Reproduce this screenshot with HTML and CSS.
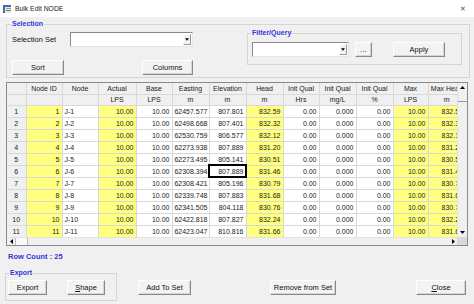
FILE: index.html
```html
<!DOCTYPE html>
<html lang="en">
<head>
  <meta charset="UTF-8">
  <title>Bulk Edit NODE</title>
  <link rel="stylesheet" href="styles.css">
</head>
<body>
  <div class="titlebar">
    <svg class="appicon" viewBox="0 0 8 8">
      <rect x="0" y="0" width="8" height="8" fill="#dfe6f2"/>
      <rect x="0" y="0" width="8" height="2" fill="#3b6cc4"/>
      <rect x="0" y="0" width="2" height="8" fill="#3b6cc4"/>
      <rect x="3" y="3" width="5" height="1" fill="#e08a2c"/>
      <rect x="3" y="5" width="5" height="1" fill="#4a9a4a"/>
    </svg>
    <span class="title">Bulk Edit NODE</span>
    <span class="close">&#x2715;</span>
  </div>

  <fieldset class="group selection">
    <legend>Selection</legend>
    <div class="sel-left">
      <div class="sel-row">
        <label>Selection Set</label>
        <div class="combo set-combo">
          <span class="drop"><svg viewBox="0 0 5 3"><path d="M0 0h5L2.5 3z"/></svg></span>
        </div>
      </div>
      <div class="sel-buttons">
        <button class="btn sort">Sort</button>
        <button class="btn columns">Columns</button>
      </div>
    </div>
    <fieldset class="group filter">
      <legend>Filter/Query</legend>
      <div class="combo filter-combo">
        <span class="drop"><svg viewBox="0 0 5 3"><path d="M0 0h5L2.5 3z"/></svg></span>
      </div>
      <button class="btn dots">...</button>
      <button class="btn apply">Apply</button>
    </fieldset>
  </fieldset>

  <div class="grid">
    <div class="sheet">
      <table>
        <colgroup>
          <col class="c-row"><col class="c36"><col class="c36"><col class="c38"><col class="c36">
          <col class="c37"><col class="c37"><col class="c37"><col class="c36"><col class="c37">
          <col class="c37"><col class="c35"><col class="c37">
        </colgroup>
        <thead>
          <tr>
            <th></th><th>Node ID</th><th>Node</th><th>Actual</th><th>Base</th><th>Easting</th>
            <th>Elevation</th><th>Head</th><th>Init Qual</th><th>Init Qual</th><th>Init Qual</th>
            <th>Max</th><th>Max Head</th>
          </tr>
          <tr>
            <th></th><th></th><th></th><th>LPS</th><th>LPS</th><th>m</th>
            <th>m</th><th>m</th><th>Hrs</th><th>mg/L</th><th>%</th>
            <th>LPS</th><th>m</th>
          </tr>
        </thead>
        <tbody id="rows"></tbody>
      </table>
    </div>
    <div class="vscroll">
      <span class="arrow"><svg viewBox="0 0 5 3"><path d="M0 3h5L2.5 0z"/></svg></span>
      <span class="vthumb"></span>
      <span class="track"></span>
      <span class="arrow"><svg viewBox="0 0 5 3"><path d="M0 0h5L2.5 3z"/></svg></span>
    </div>
    <div class="hscroll">
      <span class="arrow"><svg viewBox="0 0 3 5"><path d="M3 0v5L0 2.5z"/></svg></span>
      <span class="hthumb"></span>
      <span class="track"></span>
      <span class="arrow"><svg viewBox="0 0 3 5"><path d="M0 0v5L3 2.5z"/></svg></span>
    </div>
    <div class="corner"></div>
  </div>

  <div class="rowcount">Row Count : 25</div>

  <div class="bottom">
    <fieldset class="group export">
      <legend>Export</legend>
      <button class="btn b-export">Export</button>
      <button class="btn b-shape"><u>S</u>hape</button>
    </fieldset>
    <button class="btn addset">Add To Set</button>
    <button class="btn removeset">Remove from Set</button>
    <button class="btn closebtn"><u>C</u>lose</button>
  </div>

  <script>
    const nodes = [
      ['62457.577', '807.801', '832.59'],
      ['62498.668', '807.401', '832.32'],
      ['62530.759', '806.577', '832.12'],
      ['62273.938', '807.889', '831.20'],
      ['62273.495', '805.141', '830.51'],
      ['62308.394', '807.889', '831.46'],
      ['62308.421', '805.196', '830.79'],
      ['62339.748', '807.883', '831.68'],
      ['62341.505', '804.118', '830.76'],
      ['62422.818', '807.827', '832.24'],
      ['62423.047', '810.816', '831.66']
    ];

    const body = document.getElementById('rows');

    nodes.forEach(([easting, elevation, head], i) => {
      const id = i + 1;
      const current = id === 6 ? ' current' : '';
      const tr = document.createElement('tr');
      tr.innerHTML =
        `<td class="rowhead">${id}</td>` +
        `<td class="calc num">${id}</td>` +
        `<td>J-${id}</td>` +
        `<td class="calc num">10.00</td>` +
        `<td class="num">10.00</td>` +
        `<td class="num tight">${easting}</td>` +
        `<td class="num${current}">${elevation}</td>` +
        `<td class="calc num">${head}</td>` +
        `<td class="num">0.00</td>` +
        `<td class="num">0.000</td>` +
        `<td class="num">0.00</td>` +
        `<td class="calc num">10.00</td>` +
        `<td class="calc num">${head}</td>`;
      body.appendChild(tr);
    });
  </script>
</body>
</html>
```

FILE: styles.css
```css
body {
  margin: 0;
  width: 474px;
  height: 304px;
  overflow: hidden;
  background: #f0f0f0;
  font-family: "Liberation Sans", Arial, sans-serif;
  font-size: 7.5px;
  color: #111;
}

.titlebar {
  height: 17px;
  background: #fff;
  display: flex;
  align-items: center;
  padding: 0 8px 0 3px;
}

.appicon {
  width: 8px;
  height: 8px;
  margin-right: 4px;
}

.title {
  flex: 1;
  font-size: 6.8px;
  color: #222;
}

.close {
  font-size: 7px;
  color: #555;
}

/* group boxes */
.group {
  margin: 0;
  padding: 0;
  min-width: 0;
  border: 1px solid #d5d5d5;
}

.group legend {
  padding: 0 1px;
  margin-left: -1px;
  font-size: 7px;
  line-height: 8px;
  font-weight: bold;
  color: #3434d8;
}

.selection {
  margin: 3px 4px 0 6px;
  padding: 0 7px 2px 5px;
  display: flex;
  align-items: flex-start;
}

.sel-left {
  width: 181px;
}

.sel-row {
  display: flex;
  align-items: center;
  margin-top: 4px;
}

.sel-row label {
  width: 58px;
}

.set-combo {
  width: 123px;
}

.sel-buttons {
  display: flex;
  justify-content: space-between;
  margin-top: 13px;
}

.sort { width: 52px; }
.columns { width: 51px; }

.filter {
  margin: 1px 0 0 auto;
  width: 204px;
  padding: 5px 5px 7px 4px;
  display: flex;
  align-items: center;
}

.filter-combo { width: 97px; }
.dots { width: 17px; margin-left: 6px; }
.apply { width: 52px; margin-left: 21px; }

/* controls */
.btn {
  height: 15px;
  padding: 0;
  font-family: inherit;
  font-size: 7.5px;
  color: #111;
  background: #f3f3f3;
  border: 1px solid;
  border-color: #fff #888 #888 #fff;
  box-shadow: inset -1px -1px #d6d6d6;
}

.btn u {
  text-decoration-thickness: 1px;
}

.combo {
  height: 15px;
  box-sizing: border-box;
  background: #fff;
  border: 1px solid;
  border-color: #8a8a8a #e6e6e6 #e6e6e6 #8a8a8a;
  display: flex;
  justify-content: flex-end;
  align-items: center;
  padding-right: 1px;
}

.drop {
  width: 8px;
  height: 11px;
  box-sizing: border-box;
  display: flex;
  align-items: center;
  justify-content: center;
  background: #f3f3f3;
  border: 1px solid;
  border-color: #fff #999 #999 #fff;
}

.drop svg {
  width: 4px;
  height: 3px;
}

/* data grid */
.grid {
  margin: 4px 0 0 6px;
  width: 462px;
  height: 164px;
  box-sizing: border-box;
  border: 1px solid #8a8a8a;
  background: #fff;
  display: grid;
  grid-template-columns: 1fr 10px;
  grid-template-rows: 1fr 8px;
}

.sheet {
  overflow: hidden;
}

.sheet table {
  width: 458px;
  table-layout: fixed;
  border-collapse: collapse;
  border-style: hidden;
  font-size: 7px;
  color: #222;
}

.c-row { width: 19px; }
.c35 { width: 35px; }
.c36 { width: 36px; }
.c37 { width: 37px; }
.c38 { width: 38px; }

.sheet th,
.sheet td {
  padding: 0 2px;
  border: 1px solid #d8d8d8;
  line-height: 9px;
  white-space: nowrap;
}

.sheet thead tr {
  height: 11px;
}

.sheet tbody tr {
  height: 12px;
}

.sheet th {
  font-weight: normal;
  background: #f0f0f0;
  text-align: center;
}

.sheet .rowhead {
  background: #f0f0f0;
  text-align: center;
}

.sheet .num {
  text-align: right;
}

.sheet .tight {
  padding: 0 1px 0 0;
}

.sheet .calc {
  background: #ffff80;
}

.sheet .current {
  outline: 2px solid #000;
  outline-offset: -1px;
}

/* scrollbars */
.vscroll,
.hscroll {
  display: flex;
  background: #f0f0f0;
}

.vscroll {
  flex-direction: column;
  border-left: 1px solid #e2e2e2;
}

.hscroll {
  border-top: 1px solid #e2e2e2;
}

.arrow {
  display: flex;
  align-items: center;
  justify-content: center;
}

.vscroll .arrow {
  height: 9px;
}

.vscroll .arrow svg {
  width: 5px;
  height: 3px;
}

.hscroll .arrow {
  width: 8px;
}

.hscroll .arrow svg {
  width: 3px;
  height: 5px;
}

.vthumb {
  height: 9px;
  border-bottom: 1px solid #9a9a9a;
}

.hthumb {
  width: 11px;
  border-right: 1px solid #bdbdbd;
  border-left: 1px solid #bdbdbd;
  background: #fafafa;
}

.track {
  flex: 1;
}

.corner {
  background: #d9d9d9;
}

/* bottom */
.rowcount {
  margin: 6px 0 0 8px;
  line-height: 10px;
  font-weight: bold;
  color: #3434d8;
}

.bottom {
  display: flex;
  align-items: flex-start;
  margin: 7px 0 0 5px;
}

.export {
  padding: 3px 11px 5px 2px;
  display: flex;
  gap: 20px;
}

.export legend {
  margin-left: 1px;
}

.b-export { width: 39px; }
.b-shape { width: 38px; }

.addset { width: 53px; margin: 11px 0 0 21px; }
.removeset { width: 66px; margin: 11px 0 0 79px; }
.closebtn { width: 50px; margin: 11px 0 0 80px; }
```
